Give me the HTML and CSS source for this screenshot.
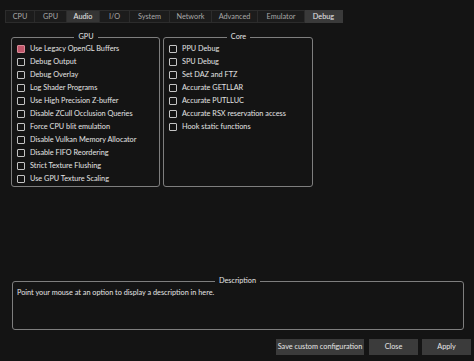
FILE: index.html
```html
<!DOCTYPE html>
<html>
<head>
<meta charset="utf-8">
<link rel="stylesheet" href="styles.css">
</head>
<body>
<div class="app">
  <div class="tabs">
    <div class="tab">CPU</div>
    <div class="tab">GPU</div>
    <div class="tab hover">Audio</div>
    <div class="tab">I/O</div>
    <div class="tab">System</div>
    <div class="tab">Network</div>
    <div class="tab">Advanced</div>
    <div class="tab">Emulator</div>
    <div class="tab active">Debug</div>
  </div>
  <div class="groups">
    <fieldset class="group gpu">
      <legend>GPU</legend>
      <div class="row"><span class="cb checked"></span>Use Legacy OpenGL Buffers</div>
      <div class="row"><span class="cb"></span>Debug Output</div>
      <div class="row"><span class="cb"></span>Debug Overlay</div>
      <div class="row"><span class="cb"></span>Log Shader Programs</div>
      <div class="row"><span class="cb"></span>Use High Precision Z-buffer</div>
      <div class="row"><span class="cb"></span>Disable ZCull Occlusion Queries</div>
      <div class="row"><span class="cb"></span>Force CPU blit emulation</div>
      <div class="row"><span class="cb"></span>Disable Vulkan Memory Allocator</div>
      <div class="row"><span class="cb"></span>Disable FIFO Reordering</div>
      <div class="row"><span class="cb"></span>Strict Texture Flushing</div>
      <div class="row"><span class="cb"></span>Use GPU Texture Scaling</div>
    </fieldset>
    <fieldset class="group core">
      <legend>Core</legend>
      <div class="row"><span class="cb"></span>PPU Debug</div>
      <div class="row"><span class="cb"></span>SPU Debug</div>
      <div class="row"><span class="cb"></span>Set DAZ and FTZ</div>
      <div class="row"><span class="cb"></span>Accurate GETLLAR</div>
      <div class="row"><span class="cb"></span>Accurate PUTLLUC</div>
      <div class="row"><span class="cb"></span>Accurate RSX reservation access</div>
      <div class="row"><span class="cb"></span>Hook static functions</div>
    </fieldset>
  </div>
  <div class="spacer"></div>
  <fieldset class="group desc">
    <legend>Description</legend>
    <div class="desc-text">Point your mouse at an option to display a description in here.</div>
  </fieldset>
  <div class="buttons">
    <div class="btn save">Save custom configuration</div>
    <div class="btn close">Close</div>
    <div class="btn apply">Apply</div>
  </div>
</div>
</body>
</html>
```

FILE: styles.css
```css
html, body {
  margin: 0;
  padding: 0;
  background: #141414;
}
body {
  font-family: "Lato", "Open Sans", "DejaVu Sans", sans-serif;
  font-size: 7.3px;
  color: #e4e4e4;
}
.app {
  height: 361px;
  display: flex;
  flex-direction: column;
  box-sizing: border-box;
  padding: 10px 3px 6px 5px;
}
.tabs {
  display: flex;
  height: 13px;
}
.tab {
  box-sizing: border-box;
  height: 13px;
  line-height: 12px;
  background: #1c1c1c;
  border: 1px solid #2c2c2c;
  border-left: none;
  color: #a8a8a8;
  text-align: center;
  white-space: nowrap;
}
.tab:first-child { border-left: 1px solid #2c2c2c; }
.tab:nth-child(1) { width: 30px; }
.tab:nth-child(2) { width: 32px; }
.tab:nth-child(3) { width: 33px; }
.tab:nth-child(4) { width: 30px; }
.tab:nth-child(5) { width: 40px; }
.tab:nth-child(6) { width: 42px; }
.tab:nth-child(7) { width: 46px; }
.tab:nth-child(8) { width: 47px; }
.tab:nth-child(9) { width: 38px; }
.tab.hover { background: #353535; color: #e8e8e8; }
.tab.active { background: #3a3a3a; color: #e8e8e8; border-color: #3a3a3a; }

.groups {
  display: flex;
  gap: 3px;
  margin-top: 9px;
  padding-left: 6px;
}
.group {
  margin: 0;
  border: 1px solid #7e7e7e;
  border-radius: 3px;
  padding: 0 4px 0 5px;
  min-width: 0;
}
.group legend {
  margin: 0 auto;
  padding: 0 4px;
  line-height: 10px;
  height: 10px;
  color: #e4e4e4;
}
.gpu { width: 149px; height: 155px; box-sizing: border-box; }
.core { width: 150px; height: 155px; box-sizing: border-box; }
.row {
  display: flex;
  align-items: center;
  height: 13px;
  white-space: nowrap;
}
.cb {
  box-sizing: border-box;
  width: 8px;
  height: 8px;
  border: 1px solid #c4c4c4;
  border-radius: 1px;
  background: #141414;
  margin-right: 5px;
  flex: none;
}
.cb.checked {
  background: #c0566a;
  border-color: #d98a96;
}
.spacer { flex: 1; }
.desc {
  margin-left: 7px;
  margin-right: 7px;
  height: 54px;
  box-sizing: border-box;
  padding: 1px 5px 0 4px;
}
.desc-text { line-height: 11px; }
.buttons {
  display: flex;
  justify-content: flex-end;
  gap: 4px;
  margin-top: 9px;
}
.btn {
  box-sizing: border-box;
  height: 16px;
  line-height: 16px;
  background: #3b3b3b;
  color: #e6e6e6;
  text-align: center;
  white-space: nowrap;
}
.save { width: 88px; margin-right: 1px; }
.close { width: 49px; }
.apply { width: 49px; }
```
